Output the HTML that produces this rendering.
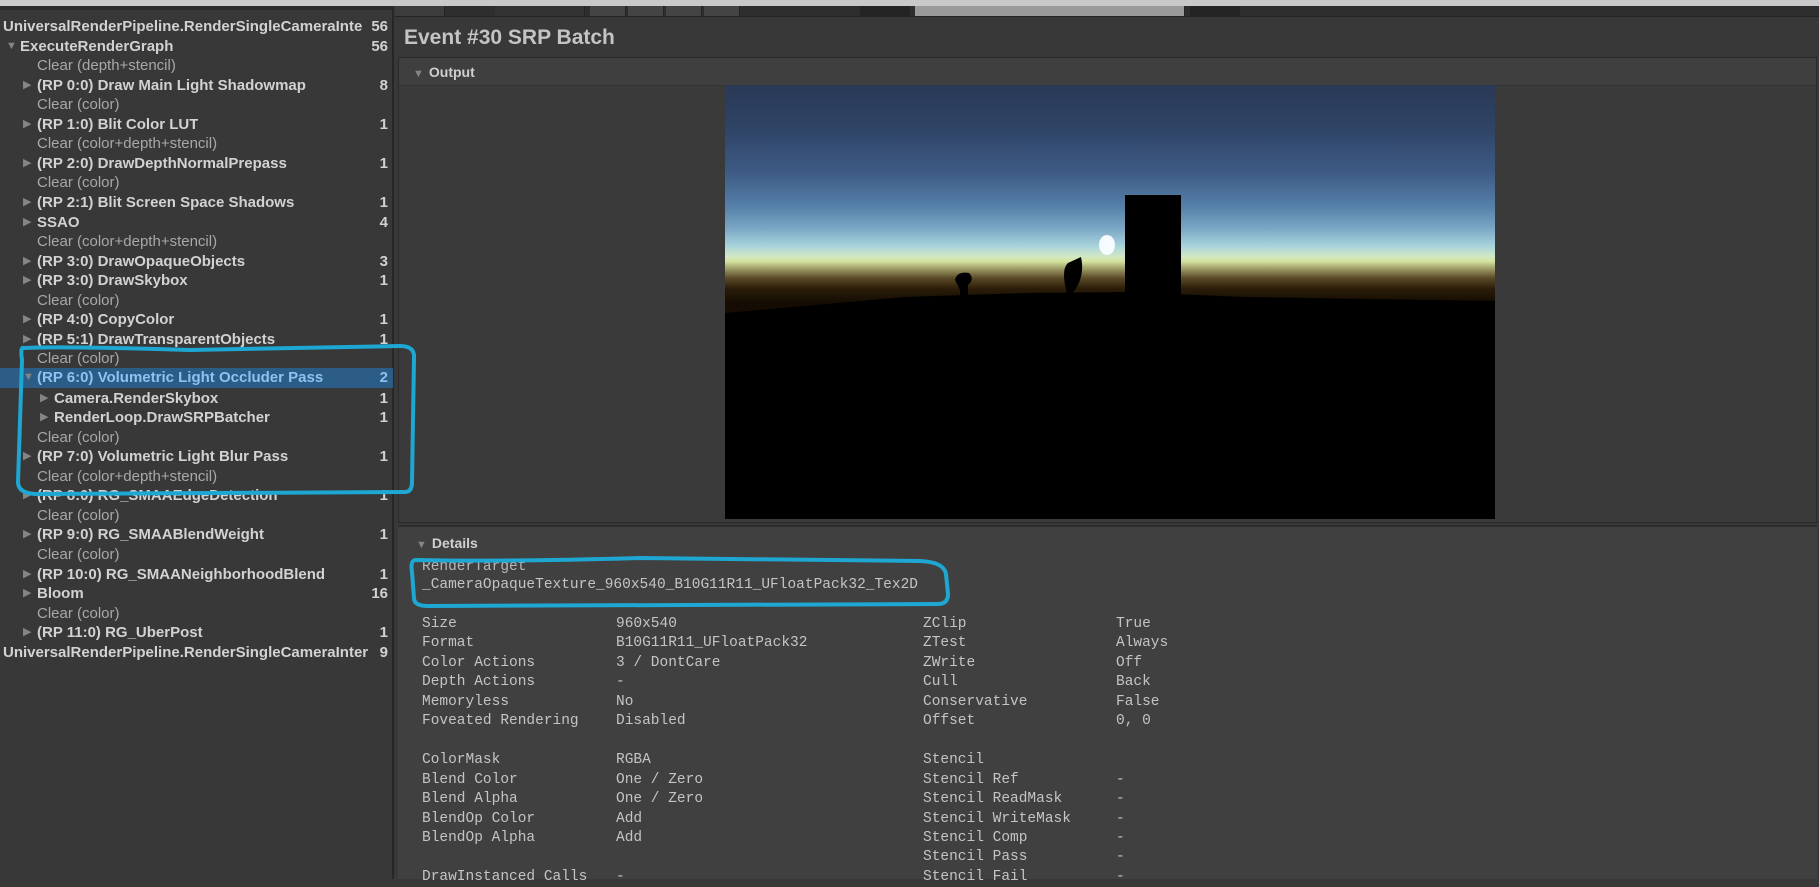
<!DOCTYPE html>
<html><head><meta charset="utf-8"><style>
*{margin:0;padding:0;box-sizing:border-box}
body{width:1819px;height:879px;overflow:hidden;background:#383838;font-family:"Liberation Sans",sans-serif;position:relative}
.topbar{position:absolute;left:0;top:0;width:1819px;height:6px;background:#c9c9c9}
.tool{position:absolute;left:395px;top:6px;width:1424px;height:11px;background:#2e2e2e;border-bottom:1px solid #232323}
.tool i{position:absolute;top:0;height:10px;background:#3c3c3c;border-right:1px solid #252525}
.left{position:absolute;left:0;top:6px;width:394px;height:873px;background:#383838;border-right:2px solid #262626}
.left .lt{position:absolute;left:0;top:0;width:394px;height:4px;background:#2a2a2a}
.row{position:absolute;left:0;width:393px;height:19.5px;line-height:19.5px;font-size:15px;color:#c4c4c4;white-space:nowrap}
.row .t{position:absolute;overflow:hidden;max-width:330px}
.row.b .t{font-weight:bold;color:#d2d2d2}
.row.c .t{color:#a8a8a8}
.row .n{position:absolute;right:5px;font-weight:bold;color:#d2d2d2}
.row .tri{position:absolute;font-size:11px;color:#858585}
.row.sel{background:#2c5d87}
.row.sel .t,.row.sel .n{color:#8ec2f2}
.title{position:absolute;left:404px;top:26px;font-size:21px;font-weight:bold;color:#c4c4c4}
.out{position:absolute;left:398px;top:57px;width:1419px;height:466px;background:#3a3a3a;border:1px solid #2a2a2a}
.oh{position:absolute;left:0;top:0;width:100%;height:28px;background:#3f3f3f;border-bottom:1px solid #333}
.hdr{position:absolute;font-size:14px;font-weight:bold;color:#d0d0d0}
.img{position:absolute;left:725px;top:85px;width:770px;height:434px;overflow:hidden;background:linear-gradient(180deg,#293955 0%,#2f4466 10%,#3d5a84 20%,#5580a8 28%,#7aa6c4 33%,#a8d2dc 37%,#d0e8c4 39.5%,#d4e4a0 40.6%,#a8a870 42%,#5a4a28 44.5%,#2a1c08 47%,#150d03 50%)}
.det{position:absolute;left:398px;top:525px;width:1419px;height:354px;background:#404040;border-top:2px solid #2c2c2c}
.m{position:absolute;font-family:"Liberation Mono",monospace;font-size:14.5px;color:#c4c4c4;white-space:nowrap}
</style></head><body>
<div class="topbar"></div>
<div class="tool"><i style="left:0;width:50px"></i><i style="left:100px;width:90px;background:#333"></i><i style="left:195px;width:36px;background:#444"></i><i style="left:233px;width:36px;background:#444"></i><i style="left:271px;width:36px;background:#444"></i><i style="left:309px;width:36px;background:#444"></i><i style="left:465px;width:50px;background:#242424"></i><i style="left:520px;width:270px;background:#9a9a9a"></i><i style="left:795px;width:50px;background:#242424"></i></div>
<div class="left"><div class="lt"></div></div>

<div class="row b" style="top:17px"><span class="t" style="left:3px;max-width:370px">UniversalRenderPipeline.RenderSingleCameraInte</span><span class="n">56</span></div>
<div class="row b" style="top:36.5px"><span class="tri" style="left:6px">▼</span><span class="t" style="left:20px">ExecuteRenderGraph</span><span class="n">56</span></div>
<div class="row c" style="top:56px"><span class="t" style="left:37px">Clear (depth+stencil)</span></div>
<div class="row b" style="top:75.6px"><span class="tri" style="left:23px">▶</span><span class="t" style="left:37px">(RP 0:0) Draw Main Light Shadowmap</span><span class="n">8</span></div>
<div class="row c" style="top:95.2px"><span class="t" style="left:37px">Clear (color)</span></div>
<div class="row b" style="top:114.7px"><span class="tri" style="left:23px">▶</span><span class="t" style="left:37px">(RP 1:0) Blit Color LUT</span><span class="n">1</span></div>
<div class="row c" style="top:134.3px"><span class="t" style="left:37px">Clear (color+depth+stencil)</span></div>
<div class="row b" style="top:153.8px"><span class="tri" style="left:23px">▶</span><span class="t" style="left:37px">(RP 2:0) DrawDepthNormalPrepass</span><span class="n">1</span></div>
<div class="row c" style="top:173.4px"><span class="t" style="left:37px">Clear (color)</span></div>
<div class="row b" style="top:193px"><span class="tri" style="left:23px">▶</span><span class="t" style="left:37px">(RP 2:1) Blit Screen Space Shadows</span><span class="n">1</span></div>
<div class="row b" style="top:212.5px"><span class="tri" style="left:23px">▶</span><span class="t" style="left:37px">SSAO</span><span class="n">4</span></div>
<div class="row c" style="top:232px"><span class="t" style="left:37px">Clear (color+depth+stencil)</span></div>
<div class="row b" style="top:251.6px"><span class="tri" style="left:23px">▶</span><span class="t" style="left:37px">(RP 3:0) DrawOpaqueObjects</span><span class="n">3</span></div>
<div class="row b" style="top:271.2px"><span class="tri" style="left:23px">▶</span><span class="t" style="left:37px">(RP 3:0) DrawSkybox</span><span class="n">1</span></div>
<div class="row c" style="top:290.7px"><span class="t" style="left:37px">Clear (color)</span></div>
<div class="row b" style="top:310.3px"><span class="tri" style="left:23px">▶</span><span class="t" style="left:37px">(RP 4:0) CopyColor</span><span class="n">1</span></div>
<div class="row b" style="top:329.8px"><span class="tri" style="left:23px">▶</span><span class="t" style="left:37px">(RP 5:1) DrawTransparentObjects</span><span class="n">1</span></div>
<div class="row c" style="top:349.4px"><span class="t" style="left:37px">Clear (color)</span></div>
<div class="row b sel" style="top:368.4px"><span class="tri" style="left:23px">▼</span><span class="t" style="left:37px">(RP 6:0) Volumetric Light Occluder Pass</span><span class="n">2</span></div>
<div class="row b" style="top:388.5px"><span class="tri" style="left:40px">▶</span><span class="t" style="left:54px">Camera.RenderSkybox</span><span class="n">1</span></div>
<div class="row b" style="top:408px"><span class="tri" style="left:40px">▶</span><span class="t" style="left:54px">RenderLoop.DrawSRPBatcher</span><span class="n">1</span></div>
<div class="row c" style="top:427.6px"><span class="t" style="left:37px">Clear (color)</span></div>
<div class="row b" style="top:447.2px"><span class="tri" style="left:23px">▶</span><span class="t" style="left:37px">(RP 7:0) Volumetric Light Blur Pass</span><span class="n">1</span></div>
<div class="row c" style="top:466.7px"><span class="t" style="left:37px">Clear (color+depth+stencil)</span></div>
<div class="row b" style="top:486.3px"><span class="tri" style="left:23px">▶</span><span class="t" style="left:37px">(RP 8:0) RG_SMAAEdgeDetection</span><span class="n">1</span></div>
<div class="row c" style="top:505.8px"><span class="t" style="left:37px">Clear (color)</span></div>
<div class="row b" style="top:525.4px"><span class="tri" style="left:23px">▶</span><span class="t" style="left:37px">(RP 9:0) RG_SMAABlendWeight</span><span class="n">1</span></div>
<div class="row c" style="top:545px"><span class="t" style="left:37px">Clear (color)</span></div>
<div class="row b" style="top:564.5px"><span class="tri" style="left:23px">▶</span><span class="t" style="left:37px">(RP 10:0) RG_SMAANeighborhoodBlend</span><span class="n">1</span></div>
<div class="row b" style="top:584px"><span class="tri" style="left:23px">▶</span><span class="t" style="left:37px">Bloom</span><span class="n">16</span></div>
<div class="row c" style="top:603.6px"><span class="t" style="left:37px">Clear (color)</span></div>
<div class="row b" style="top:623.2px"><span class="tri" style="left:23px">▶</span><span class="t" style="left:37px">(RP 11:0) RG_UberPost</span><span class="n">1</span></div>
<div class="row b" style="top:642.7px"><span class="t" style="left:3px;max-width:370px">UniversalRenderPipeline.RenderSingleCameraInter</span><span class="n">9</span></div>

<div class="title">Event #30 SRP Batch</div>
<div class="out"><div class="oh"></div>
<div class="hdr" style="left:14px;top:6px"><span style="font-size:11px;color:#858585;margin-right:5px">▼</span>Output</div></div>
<div class="img">
<svg width="770" height="434" style="position:absolute;left:0;top:0">
<ellipse cx="382" cy="160" rx="8" ry="10" fill="#f6fbff"/>
<path d="M0 228 L180 212 L300 208 L400 207 L520 212 L770 216 L770 434 L0 434Z" fill="#000"/>
<rect x="400" y="110" width="56" height="100" fill="#000"/>
<path d="M230 195 Q232 186 244 188 Q250 194 243 200 L243 215 L235 215 L235 205Z" fill="#000"/>
<path d="M343 212 Q335 185 343 178 L356 172 Q360 190 350 205Z" fill="#000"/>
</svg></div>

<div class="det">
<div class="hdr" style="left:18px;top:8px"><span style="font-size:11px;color:#858585;margin-right:5px">▼</span>Details</div>
</div>
<div class="m" style="left:422px;top:559px;color:#b8b8b8">RenderTarget</div>
<div class="m" style="left:422px;top:577px">_CameraOpaqueTexture_960x540_B10G11R11_UFloatPack32_Tex2D</div>

<div class="m" style="left:422px;top:615px;line-height:19.45px">Size<br>Format<br>Color Actions<br>Depth Actions<br>Memoryless<br>Foveated Rendering<br><br>ColorMask<br>Blend Color<br>Blend Alpha<br>BlendOp Color<br>BlendOp Alpha<br><br>DrawInstanced Calls</div>
<div class="m" style="left:616px;top:615px;line-height:19.45px">960x540<br>B10G11R11_UFloatPack32<br>3 / DontCare<br>-<br>No<br>Disabled<br><br>RGBA<br>One / Zero<br>One / Zero<br>Add<br>Add<br><br>-</div>
<div class="m" style="left:923px;top:615px;line-height:19.45px">ZClip<br>ZTest<br>ZWrite<br>Cull<br>Conservative<br>Offset<br><br>Stencil<br>Stencil Ref<br>Stencil ReadMask<br>Stencil WriteMask<br>Stencil Comp<br>Stencil Pass<br>Stencil Fail</div>
<div class="m" style="left:1116px;top:615px;line-height:19.45px">True<br>Always<br>Off<br>Back<br>False<br>0, 0<br><br><br>-<br>-<br>-<br>-<br>-<br>-</div>

<svg width="1819" height="879" style="position:absolute;left:0;top:0;pointer-events:none">
<path d="M24 348 Q20 346 22 360 L18 482 Q18 493 35 494 L405 492 Q412 492 412 482 L414 358 Q415 346 400 346 L190 350 Q60 346 24 348Z" fill="none" stroke="#1ea7d2" stroke-width="4"/>
<path d="M416 560 Q410 560 412 572 L414 598 Q414 606 428 606 L938 604 Q948 604 948 594 L946 574 Q944 562 920 561 L640 558 Q500 562 416 560Z" fill="none" stroke="#1ea7d2" stroke-width="4"/>
</svg>
</body></html>
